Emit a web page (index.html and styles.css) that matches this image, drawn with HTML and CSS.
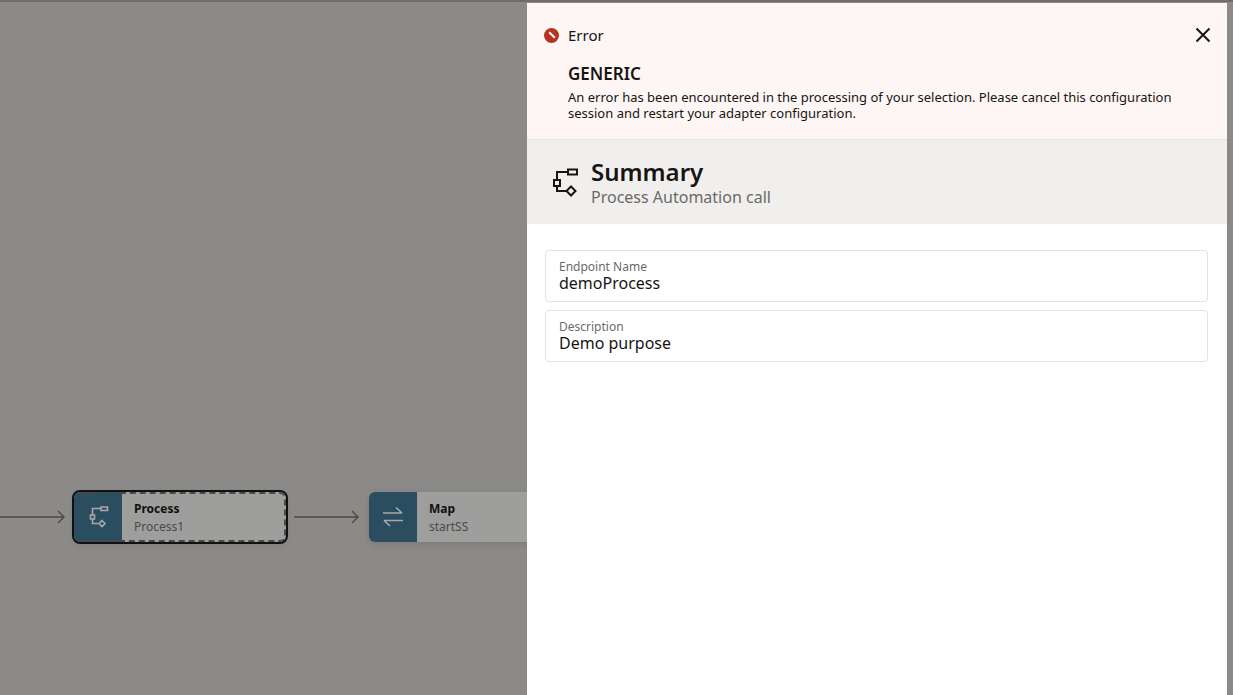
FILE: index.html
```html
<!DOCTYPE html>
<html lang="en">
<head>
  <meta charset="UTF-8">
  <title>Summary</title>
  <link rel="stylesheet" href="styles.css">
</head>
<body>
  <div class="page">
    <div class="canvas">
      <svg class="arrow arrow-in" viewBox="0 0 66 14"><path d="M0 7H64M58 1l6 6-6 6"/></svg>
      <div class="node node-selected">
        <div class="node-icon">
          <svg viewBox="0 0 24 24"><path d="M15 4.5H6.5V11M6.500 15V19.500H12M4.500 11H8.500V15H4.500ZM15 3H21.500V6.500H15ZM16 16.500L19 19.500L16 22.500L13 19.500Z" transform="translate(0 -1)"/></svg>
        </div>
        <div class="node-text">
          <div class="node-title">Process</div>
          <div class="node-sub">Process1</div>
        </div>
      </div>
      <svg class="arrow arrow-mid" viewBox="0 0 66 14"><path d="M0 7H64M58 1l6 6-6 6"/></svg>
      <div class="node node-map">
        <div class="node-icon">
          <svg viewBox="0 0 24 24"><path d="M2 8H21M15 2.500L21 8M22 15.500H3M3 15.500L9 21"/></svg>
        </div>
        <div class="node-text">
          <div class="node-title">Map</div>
          <div class="node-sub">startSS</div>
        </div>
      </div>
    </div>

    <div class="panel">
      <div class="error-box">
        <div class="error-head">
          <span class="error-icon"></span>
          <span class="error-label">Error</span>
          <svg class="close" viewBox="0 0 16 16"><path d="M1.500 1.500L14.500 14.500M14.500 1.500L1.500 14.500"/></svg>
        </div>
        <div class="error-title">GENERIC</div>
        <p class="error-text">An error has been encountered in the processing of your selection. Please cancel this configuration session and restart your adapter configuration.</p>
      </div>

      <div class="summary">
        <svg class="summary-icon" viewBox="0 0 28 28"><path d="M17 5H6V13M6 19V24H15M3 13H9V19H3ZM17 2.500H26V7.500H17ZM20 19.500L24.500 24L20 28.500L15.500 24Z" transform="translate(0 -1)"/></svg>
        <div>
          <div class="summary-title">Summary</div>
          <div class="summary-sub">Process Automation call</div>
        </div>
      </div>

      <div class="fields">
        <div class="field">
          <div class="field-label">Endpoint Name</div>
          <div class="field-value">demoProcess</div>
        </div>
        <div class="field">
          <div class="field-label">Description</div>
          <div class="field-value">Demo purpose</div>
        </div>
      </div>
    </div>
  </div>
</body>
</html>
```

FILE: styles.css
```css
* {
  margin: 0;
  padding: 0;
  box-sizing: border-box;
}

html, body {
  height: 100%;
  overflow: hidden;
}

body {
  font-family: "Noto Sans", "Open Sans", sans-serif;
  background: #8b8a88;
  color: #161513;
}

.page {
  display: flex;
  height: 100%;
  padding-right: 6px;
  border-top: 2px solid #6e6d6b;
}

.canvas {
  position: relative;
  width: 527px;
  height: 100%;
  overflow: hidden;
  background: #8b8a88;
}

/* nodes of the diagram sit at their own place on the canvas */
.arrow {
  position: absolute;
  top: 508px;
  width: 66px;
  height: 14px;
  fill: none;
  stroke: #4b4a48;
  stroke-width: 1.4;
}

.arrow-in { left: 0; }
.arrow-mid { left: 294px; }

.node {
  position: absolute;
  top: 490px;
  display: flex;
  height: 50px;
  border-radius: 6px;
  background: #9e9e9d;
  box-shadow: 0 2px 6px rgba(0, 0, 0, 0.12);
}

.node-selected {
  left: 74px;
  width: 212px;
  overflow: hidden;
}

.node-selected::after {
  content: "";
  position: absolute;
  inset: 0;
  border: 2px dashed #4a4948;
  border-left: none;
  border-radius: 6px;
}

.node-map {
  left: 369px;
  width: 200px;
}

.node-selected {
  outline: 2px solid #111;
  outline-offset: 0;
}

.node-icon {
  display: flex;
  align-items: center;
  justify-content: center;
  flex: none;
  width: 48px;
  background: #2a4e60;
  border-radius: 6px 0 0 6px;
}

.node-icon svg {
  width: 24px;
  height: 24px;
  fill: none;
  stroke: #a8a8a7;
  stroke-width: 1.600;
}

.node-text {
  padding: 8px 0 0 12px;
}

.node-title {
  font-size: 12px;
  font-weight: 700;
  line-height: 18px;
  color: #111;
}

.node-sub {
  font-size: 12px;
  line-height: 18px;
  color: #4a4a4c;
}

.panel {
  display: flex;
  flex-direction: column;
  width: 700px;
  height: 100%;
  margin-top: 1px;
  background: #fff;
}

.error-box {
  height: 137px;
  padding: 21px 17px 0 17px;
  background: #fef6f4;
  border-bottom: 1px solid #e4e3e1;
}

.error-head {
  display: flex;
  align-items: center;
  height: 22px;
}

.error-icon {
  position: relative;
  width: 15px;
  height: 15px;
  margin-right: 9px;
  border-radius: 50%;
  background: #b73321;
}

.error-icon::after {
  content: "";
  position: absolute;
  left: 3.500px;
  top: 6.500px;
  width: 8px;
  height: 2px;
  background: #fff;
  transform: rotate(45deg);
}

.error-label {
  font-size: 15px;
  line-height: 22px;
}

.close {
  width: 16px;
  height: 16px;
  margin-left: auto;
  margin-right: -1px;
  fill: none;
  stroke: #161513;
  stroke-width: 2;
}

.error-title {
  margin: 16px 0 0 24px;
  font-size: 17px;
  font-weight: 600;
  line-height: 24px;
}

.error-text {
  margin: 3px 0 0 24px;
  font-size: 13px;
  line-height: 16px;
  max-width: 640px;
}

.summary {
  display: flex;
  align-items: center;
  height: 84px;
  padding-left: 24px;
  background: #f0efed;
}

.summary-icon {
  width: 28px;
  height: 28px;
  margin-right: 12px;
  fill: none;
  stroke: #161513;
  stroke-width: 2;
  overflow: visible;
}

.summary-title {
  font-size: 24px;
  font-weight: 600;
  line-height: 30px;
}

.summary-sub {
  font-size: 16px;
  line-height: 20px;
  color: #6b6a68;
}

.fields {
  display: flex;
  flex-direction: column;
  gap: 8px;
  padding: 26px 19px 0 18px;
}

.field {
  height: 52px;
  padding: 9px 13px 0;
  border: 1px solid #e4e3e1;
  border-radius: 4px;
}

.field-label {
  font-size: 12px;
  line-height: 14px;
  color: #6b6a68;
}

.field-value {
  font-size: 16px;
  line-height: 18px;
}
```
